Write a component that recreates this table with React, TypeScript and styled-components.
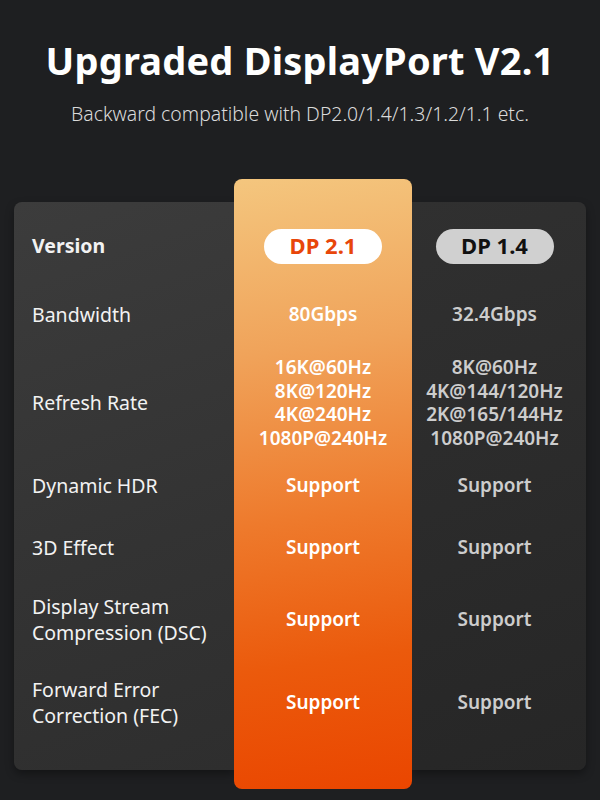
import styled, { createGlobalStyle, css } from 'styled-components';

const GlobalStyle = createGlobalStyle`
  html, body {
    margin: 0;
    padding: 0;
    background: #1e1f21;
  }
  body {
    font-family: 'Noto Sans', 'Open Sans', sans-serif;
    color: #ffffff;
  }
`;

type Row = {
  label: string[];
  height: number;
  bold?: boolean;
  dp21: string[];
  dp14: string[];
};

const ROWS: Row[] = [
  { label: ['Version'], height: 68, bold: true, dp21: ['DP 2.1'], dp14: ['DP 1.4'] },
  { label: ['Bandwidth'], height: 70, dp21: ['80Gbps'], dp14: ['32.4Gbps'] },
  {
    label: ['Refresh Rate'],
    height: 106,
    dp21: ['16K@60Hz', '8K@120Hz', '4K@240Hz', '1080P@240Hz'],
    dp14: ['8K@60Hz', '4K@144/120Hz', '2K@165/144Hz', '1080P@240Hz'],
  },
  { label: ['Dynamic HDR'], height: 60, dp21: ['Support'], dp14: ['Support'] },
  { label: ['3D Effect'], height: 64, dp21: ['Support'], dp14: ['Support'] },
  { label: ['Display Stream', 'Compression (DSC)'], height: 80, dp21: ['Support'], dp14: ['Support'] },
  { label: ['Forward Error', 'Correction (FEC)'], height: 86, dp21: ['Support'], dp14: ['Support'] },
];

const App = () => {
  return (
    <Page>
      <GlobalStyle />
      <Title>Upgraded DisplayPort V2.1</Title>
      <Subtitle>Backward compatible with DP2.0/1.4/1.3/1.2/1.1 etc.</Subtitle>
      <Table>
        <LabelColumn>
          {ROWS.map((row, i) => (
            <LabelCell key={i} $h={row.height} $bold={row.bold}>
              {row.label.map((line, j) => (
                <span key={j}>{line}</span>
              ))}
            </LabelCell>
          ))}
        </LabelColumn>
        <HighlightColumn>
          {ROWS.map((row, i) => (
            <ValueCell key={i} $h={row.height}>
              {i === 0 ? (
                <Pill $active>{row.dp21[0]}</Pill>
              ) : (
                row.dp21.map((line, j) => <span key={j}>{line}</span>)
              )}
            </ValueCell>
          ))}
        </HighlightColumn>
        <OldColumn>
          {ROWS.map((row, i) => (
            <ValueCell key={i} $h={row.height} $muted>
              {i === 0 ? (
                <Pill>{row.dp14[0]}</Pill>
              ) : (
                row.dp14.map((line, j) => <span key={j}>{line}</span>)
              )}
            </ValueCell>
          ))}
        </OldColumn>
      </Table>
    </Page>
  );
};

export default App;

const Page = styled.div`
  width: 600px;
  height: 800px;
  padding-top: 36px;
  box-sizing: border-box;
  overflow: hidden;
`;

const Title = styled.h1`
  margin: 0;
  text-align: center;
  font-size: 38px;
  line-height: 48px;
  font-weight: 700;
  color: #ffffff;
  letter-spacing: 0.2px;
`;

const Subtitle = styled.p`
  margin: 18px 0 0;
  text-align: center;
  font-size: 19.4px;
  line-height: 24px;
  font-weight: 300;
  color: #dadada;
`;

const Table = styled.div`
  display: flex;
  align-items: flex-start;
  margin: 53px 14px 0;
`;

const sideColumn = css`
  margin-top: 23px;
  padding: 10px 0 24px;
  box-shadow: 0 4px 8px rgba(0, 0, 0, 0.35);
`;

const LabelColumn = styled.div`
  ${sideColumn};
  width: 220px;
  border-radius: 8px 0 0 8px;
  background: linear-gradient(160deg, #3c3c3c 0%, #333333 60%, #2e2e2e 100%);
`;

const OldColumn = styled.div`
  ${sideColumn};
  width: 174px;
  padding-right: 9px;
  box-sizing: border-box;
  border-radius: 0 8px 8px 0;
  background: linear-gradient(160deg, #303030 0%, #2a2a2a 60%, #262626 100%);
`;

const HighlightColumn = styled.div`
  width: 178px;
  padding: 33px 0 43px;
  border-radius: 8px;
  background: linear-gradient(172deg, #f4c67e 0%, #f0a35a 28%, #ee7a2c 55%, #eb5a0c 78%, #ea4600 100%);
  position: relative;
  z-index: 1;
`;

const LabelCell = styled.div<{ $h: number; $bold?: boolean }>`
  height: ${p => p.$h}px;
  display: flex;
  flex-direction: column;
  justify-content: center;
  padding-left: 18px;
  font-size: 19.5px;
  line-height: 26px;
  font-weight: ${p => (p.$bold ? 700 : 400)};
  color: #f2f2f2;
`;

const ValueCell = styled.div<{ $h: number; $muted?: boolean }>`
  height: ${p => p.$h}px;
  display: flex;
  flex-direction: column;
  justify-content: center;
  align-items: center;
  font-size: 19px;
  line-height: 23.5px;
  font-weight: 600;
  color: ${p => (p.$muted ? '#cdcdcd' : '#ffffff')};
`;

const Pill = styled.div<{ $active?: boolean }>`
  width: 118px;
  height: 35px;
  flex-shrink: 0;
  border-radius: 18px;
  display: flex;
  align-items: center;
  justify-content: center;
  font-size: 22px;
  font-weight: 700;
  background: ${p => (p.$active ? '#ffffff' : '#d0d0d0')};
  color: ${p => (p.$active ? '#e8460a' : '#111111')};
`;
